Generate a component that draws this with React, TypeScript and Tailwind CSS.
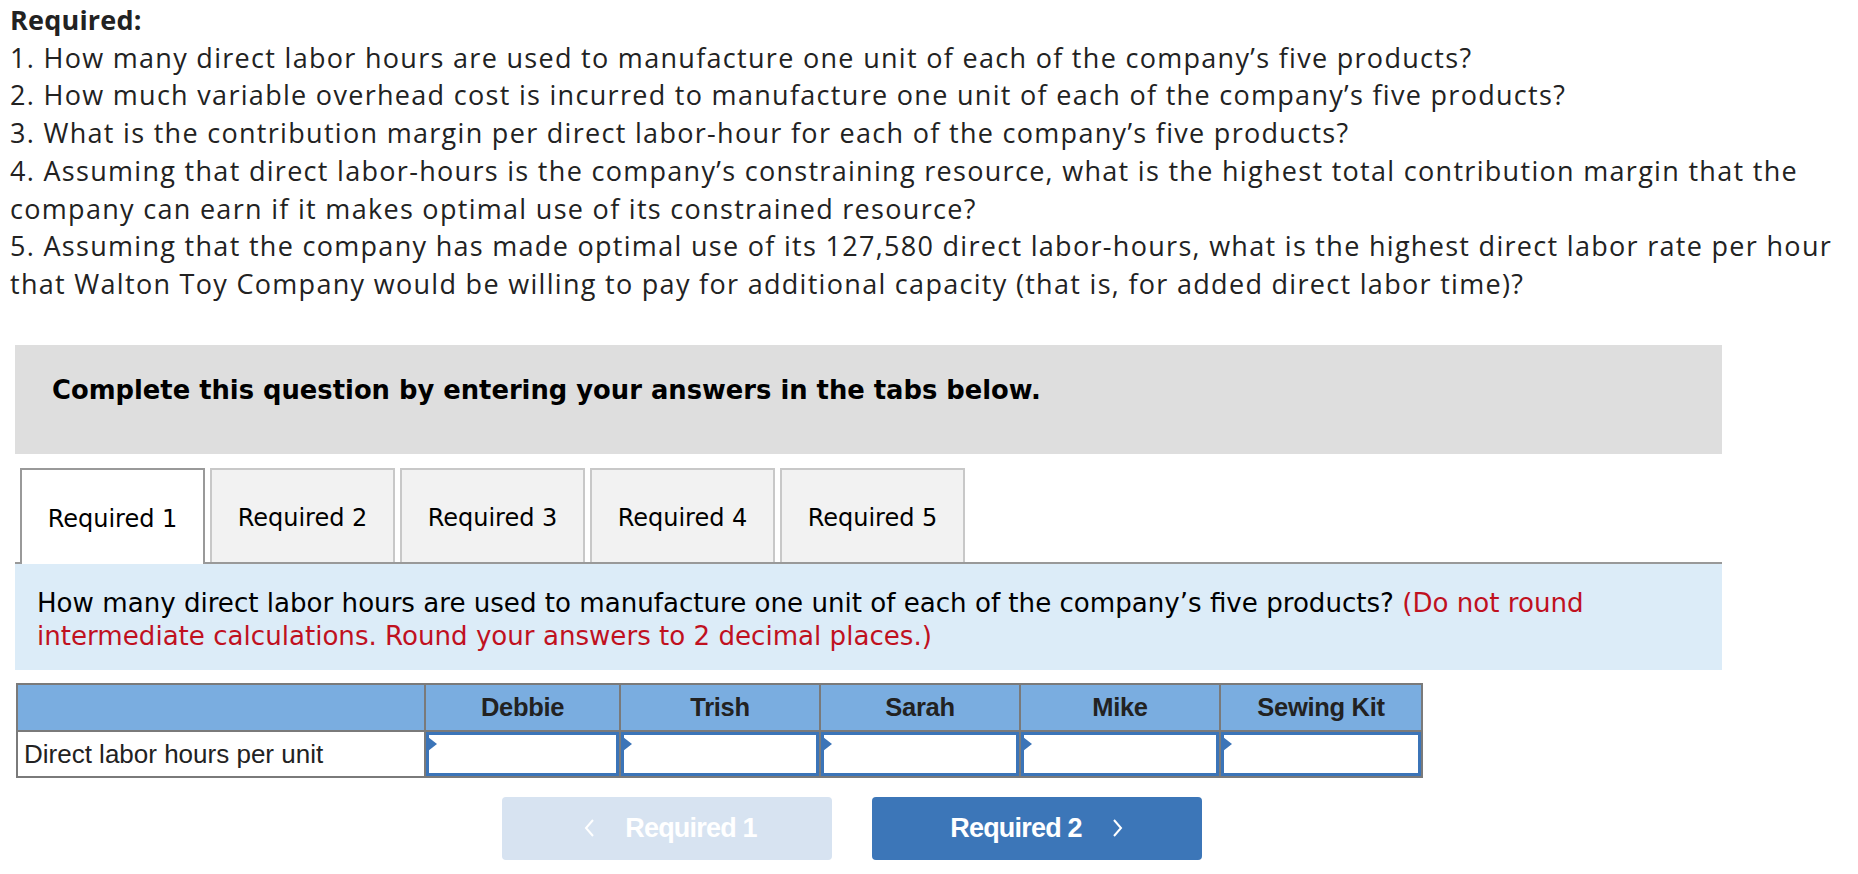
import React from "react";

const lines: { text: string; bold?: boolean }[] = [
  { text: "Required:", bold: true },
  { text: "1. How many direct labor hours are used to manufacture one unit of each of the company’s five products?" },
  { text: "2. How much variable overhead cost is incurred to manufacture one unit of each of the company’s five products?" },
  { text: "3. What is the contribution margin per direct labor-hour for each of the company’s five products?" },
  { text: "4. Assuming that direct labor-hours is the company’s constraining resource, what is the highest total contribution margin that the" },
  { text: "company can earn if it makes optimal use of its constrained resource?" },
  { text: "5. Assuming that the company has made optimal use of its 127,580 direct labor-hours, what is the highest direct labor rate per hour" },
  { text: "that Walton Toy Company would be willing to pay for additional capacity (that is, for added direct labor time)?" },
];

const cols = [
  { name: "Debbie", w: "w-[195px]" },
  { name: "Trish", w: "w-[200px]" },
  { name: "Sarah", w: "w-[200px]" },
  { name: "Mike", w: "w-[200px]" },
  { name: "Sewing Kit", w: "w-[200px]" },
];

function InputCell() {
  return (
    <div className="relative h-full w-full border-[3px] border-[#3b74b8] bg-white">
      <div className="absolute left-[-1px] top-[2px] h-0 w-0 border-y-[7px] border-l-[9px] border-y-transparent border-l-[#3b74b8]" />
    </div>
  );
}

export default function App() {
  return (
    <div className="min-h-[874px] w-[1858px] bg-white">
      <div className="pl-[10px] pr-[10px] pt-[1px] font-['Open_Sans',sans-serif] text-[27px] leading-[37.7px] tracking-[1.3px] text-[#222]">
        {lines.map((l) => (
          <div key={l.text} className={`whitespace-nowrap ${l.bold ? "font-bold tracking-[0.2px]" : ""}`}>
            {l.text}
          </div>
        ))}
      </div>

      <div className="ml-[15px] mt-[42px] w-[1707px]">
        <div className="flex h-[109px] items-center bg-[#dedede] pb-[18px] pl-[37px] font-['DejaVu_Sans',Verdana,sans-serif] text-[25.8px] font-bold text-black">
          Complete this question by entering your answers in the tabs below.
        </div>

        <div className="mt-[14px] flex h-[96px] items-end gap-[5px] border-b-[2px] border-[#999] pl-[5px] font-['DejaVu_Sans',Verdana,sans-serif] text-[24px] text-black">
          {[1, 2, 3, 4, 5].map((n) =>
            n === 1 ? (
              <div
                key={n}
                className="relative mb-[-2px] flex h-[96px] w-[185px] items-center justify-center border-[2px] border-b-0 border-[#999] bg-white pt-[4px]"
              >
                Required {n}
              </div>
            ) : (
              <div
                key={n}
                className="flex h-[94px] w-[185px] items-center justify-center border-[2px] border-b-0 border-[#c8c8c8] bg-[#f2f2f2] pt-[4px]"
              >
                Required {n}
              </div>
            )
          )}
        </div>

        <div className="h-[106px] bg-[#dcecf8] px-[22px] pt-[23.5px] font-['DejaVu_Sans',Verdana,sans-serif] text-[26.1px] leading-[33px] text-black">
          <div className="whitespace-nowrap">
            How many direct labor hours are used to manufacture one unit of each of the company’s five products?{" "}
            <span className="text-[#c0111f]">(Do not round</span>
          </div>
          <div className="whitespace-nowrap text-[#c0111f]">
            intermediate calculations. Round your answers to 2 decimal places.)
          </div>
        </div>

        <div className="mt-[13px] ml-[1px] inline-block border-[2px] border-[#7a7a7a] font-['Liberation_Sans',Arial,sans-serif] text-[25.5px] text-[#222]">
          <div className="flex h-[45px] bg-[#7aade0]">
            <div className="w-[408px] border-r-[2px] border-[#7a7a7a]" />
            {cols.map((c, i) => (
              <div
                key={c.name}
                className={`${c.w} flex items-center justify-center font-bold tracking-[-0.3px] ${i < cols.length - 1 ? "border-r-[2px] border-[#7a7a7a]" : ""}`}
              >
                {c.name}
              </div>
            ))}
          </div>
          <div className="flex h-[46px] border-t-[2px] border-[#7a7a7a] bg-white">
            <div className="flex w-[408px] items-center border-r-[2px] border-[#7a7a7a] pl-[6px] pt-[1px] text-[26px]">
              Direct labor hours per unit
            </div>
            {cols.map((c, i) => (
              <div
                key={c.name}
                className={`${c.w} ${i < cols.length - 1 ? "border-r-[2px] border-[#7a7a7a]" : ""}`}
              >
                <InputCell />
              </div>
            ))}
          </div>
        </div>

        <div className="mt-[19px] flex gap-[40px] pl-[487px] font-['Liberation_Sans',Arial,sans-serif] text-[27px] font-bold tracking-[-0.8px] text-white">
          <div className="flex h-[63px] w-[330px] items-center justify-center gap-[30px] rounded-[4px] bg-[#d7e3f1] pl-[6px]">
            <svg width="12" height="20" viewBox="0 0 12 20" fill="none">
              <path d="M10 2 L3 10 L10 18" stroke="white" strokeWidth="2" />
            </svg>
            <span>Required 1</span>
          </div>
          <div className="flex h-[63px] w-[330px] items-center justify-center gap-[30px] rounded-[4px] bg-[#3c76b8]">
            <span>Required 2</span>
            <svg width="12" height="20" viewBox="0 0 12 20" fill="none">
              <path d="M2 2 L9 10 L2 18" stroke="white" strokeWidth="2" />
            </svg>
          </div>
        </div>
      </div>
    </div>
  );
}
